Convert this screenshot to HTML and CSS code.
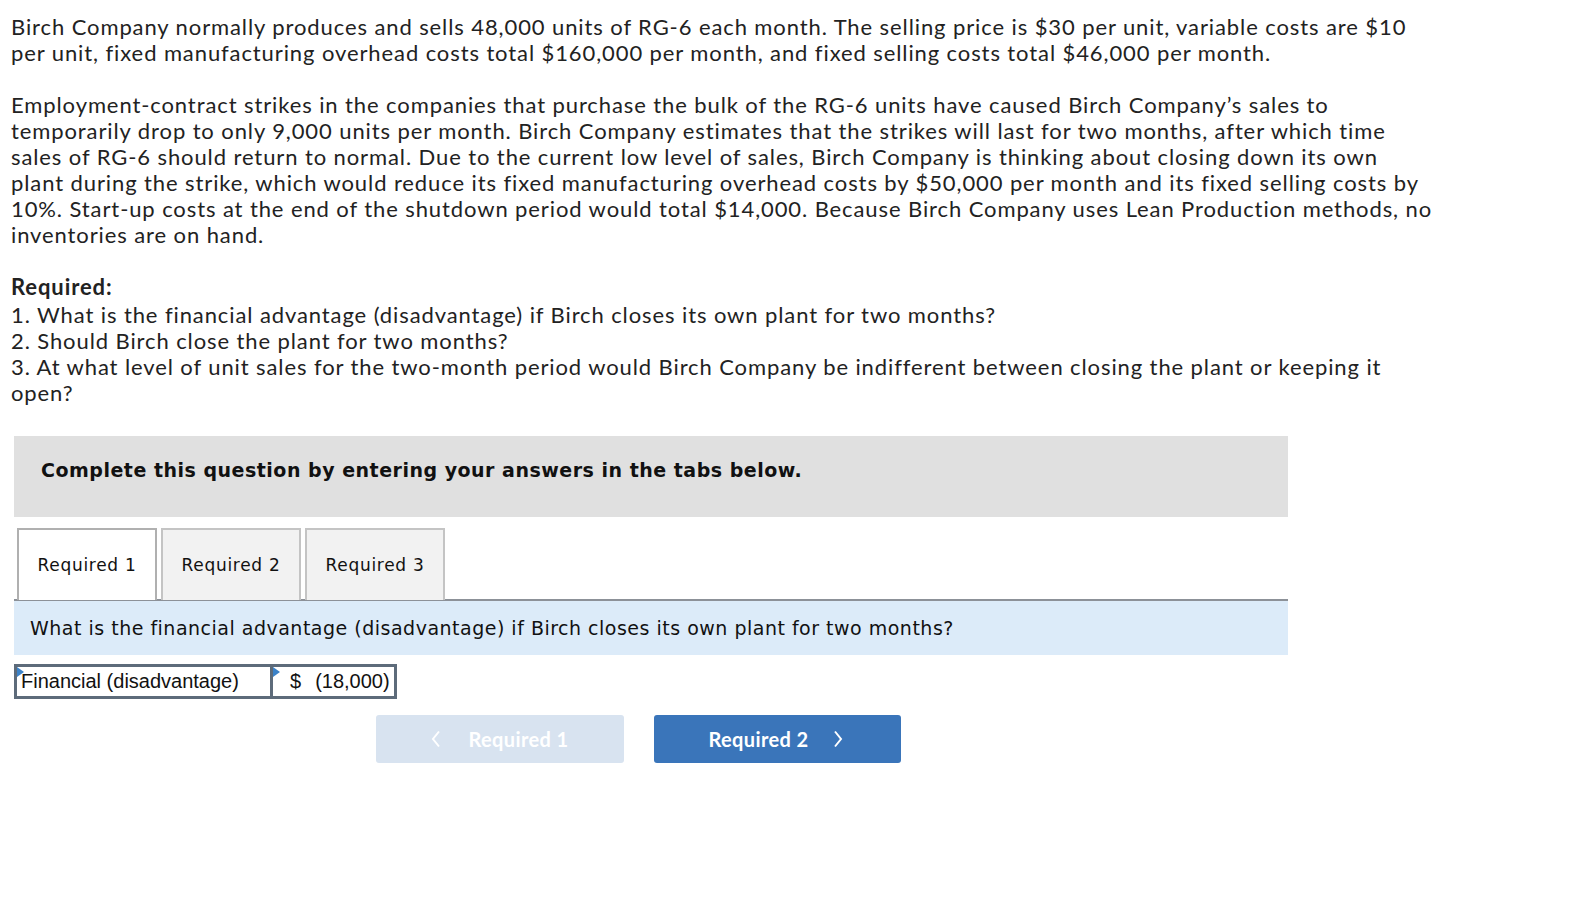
FILE: index.html
```html
<!DOCTYPE html>
<html>
<head>
<meta charset="utf-8">
<link rel="stylesheet" href="styles.css">
</head>
<body>
<div class="page">
  <p class="para">Birch Company normally produces and sells 48,000 units of RG-6 each month. The selling price is $30 per unit, variable costs are $10<br>per unit, fixed manufacturing overhead costs total $160,000 per month, and fixed selling costs total $46,000 per month.</p>
  <p class="para">Employment-contract strikes in the companies that purchase the bulk of the RG-6 units have caused Birch Company’s sales to<br>temporarily drop to only 9,000 units per month. Birch Company estimates that the strikes will last for two months, after which time<br>sales of RG-6 should return to normal. Due to the current low level of sales, Birch Company is thinking about closing down its own<br>plant during the strike, which would reduce its fixed manufacturing overhead costs by $50,000 per month and its fixed selling costs by<br>10%. Start-up costs at the end of the shutdown period would total $14,000. Because Birch Company uses Lean Production methods, no<br>inventories are on hand.</p>
  <p class="req-title">Required:</p>
  <p class="para req-list">1. What is the financial advantage (disadvantage) if Birch closes its own plant for two months?<br>2. Should Birch close the plant for two months?<br>3. At what level of unit sales for the two-month period would Birch Company be indifferent between closing the plant or keeping it<br>open?</p>

  <div class="panel">
    <div class="instructions">Complete this question by entering your answers in the tabs below.</div>
    <div class="tabs">
      <div class="tab active">Required 1</div>
      <div class="tab">Required 2</div>
      <div class="tab">Required 3</div>
    </div>
    <div class="question">What is the financial advantage (disadvantage) if Birch closes its own plant for two months?</div>
    <div class="answer">
      <div class="cell label"><span class="flag"></span>Financial (disadvantage)</div>
      <div class="cell value"><span class="flag"></span><span class="dollar">$</span><span class="num">(18,000)</span></div>
    </div>
    <div class="nav">
      <div class="btn prev"><svg class="chev-svg" width="10" height="18" viewBox="0 0 10 18"><path d="M8 1.5 L2 9 L8 16.5" fill="none" stroke="currentColor" stroke-width="2"/></svg><span>Required 1</span></div>
      <div class="btn next"><span>Required 2</span><svg class="chev-svg" width="10" height="18" viewBox="0 0 10 18"><path d="M2 1.5 L8 9 L2 16.5" fill="none" stroke="currentColor" stroke-width="2"/></svg></div>
    </div>
  </div>
</div>
</body>
</html>
```
FILE: styles.css
```css
html, body {
  margin: 0;
  padding: 0;
  background: #fff;
}
.page {
  padding: 14px 0 0 11px;
  font-family: "Lato", "Open Sans", sans-serif;
  color: #222;
  font-variant-ligatures: none;
}
.para {
  margin: 0 0 26px 0;
  font-size: 22px;
  letter-spacing: 0.9px;
  line-height: 26px;
  white-space: nowrap;
}
.req-title {
  margin: 0 0 2px 0;
  font-size: 22px;
  letter-spacing: 0.9px;
  line-height: 26px;
  font-weight: bold;
}
.req-list {
  margin-bottom: 0;
}
.panel {
  margin-top: 30px;
  margin-left: 3px;
  width: 1274px;
}
.instructions {
  background: #e0e0e0;
  height: 81px;
  box-sizing: border-box;
  padding: 22px 0 0 27px;
  font-family: "DejaVu Sans", Verdana, sans-serif;
  font-weight: bold;
  font-size: 19px;
  letter-spacing: 0.5px;
  line-height: 24px;
  color: #111;
}
.tabs {
  display: flex;
  gap: 4px;
  margin-top: 11px;
  padding-left: 3px;
  border-bottom: 2px solid #8c9198;
}
.tab {
  width: 140px;
  height: 72px;
  box-sizing: border-box;
  border: 2px solid #c4c4c4;
  border-bottom: none;
  background: #f2f2f2;
  display: flex;
  align-items: center;
  justify-content: center;
  font-family: "DejaVu Sans", Verdana, sans-serif;
  font-size: 17px;
  letter-spacing: 0.7px;
  color: #111;
  margin-bottom: -1px;
}
.tab.active {
  background: #fff;
  border-color: #b0b0b0;
}
.question {
  background: #dcebf9;
  height: 54px;
  box-sizing: border-box;
  padding-left: 16px;
  display: flex;
  align-items: center;
  font-family: "DejaVu Sans", Verdana, sans-serif;
  font-size: 19px;
  letter-spacing: 0.5px;
  color: #111;
}
.answer {
  margin-top: 9px;
  display: flex;
  width: 383px;
  height: 35px;
  box-sizing: border-box;
  border: 3px solid #5d6b7a;
  font-family: "Liberation Sans", Arial, sans-serif;
  font-size: 20px;
  color: #111;
}
.cell {
  position: relative;
  display: flex;
  align-items: center;
  height: 100%;
}
.label {
  width: 256px;
  padding-left: 4px;
  box-sizing: border-box;
  border-right: 3px solid #5d6b7a;
}
.value {
  flex: 1;
  padding-left: 17px;
  box-sizing: border-box;
}
.dollar {
  margin-right: 14px;
}
.flag {
  position: absolute;
  left: 0;
  top: 0;
  width: 0;
  height: 0;
  border-top: 5px solid transparent;
  border-bottom: 5px solid transparent;
  border-left: 7px solid #3b82c8;
}
.nav {
  display: flex;
  gap: 30px;
  margin-top: 16px;
  margin-left: 362px;
}
.btn {
  width: 248px;
  height: 48px;
  border-radius: 3px;
  display: flex;
  align-items: center;
  justify-content: center;
  gap: 27px;
  color: #fff;
  font-family: "Lato", "Open Sans", sans-serif;
  font-weight: bold;
  font-size: 20px;
  letter-spacing: 0.4px;
}
.prev {
  background: #d8e3f0;
}
.next {
  background: #3a75ba;
  width: 247px;
  gap: 24px;
  padding-right: 4px;
  box-sizing: border-box;
}
```
